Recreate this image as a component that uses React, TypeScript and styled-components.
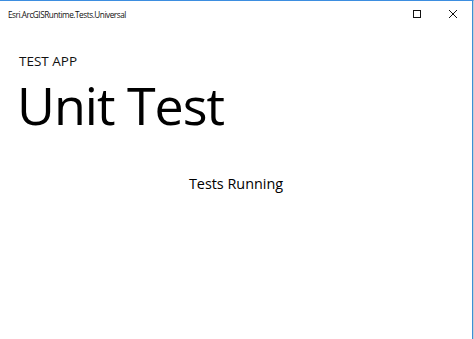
import React from 'react'
import styled, { createGlobalStyle } from 'styled-components'

const GlobalStyle = createGlobalStyle`
  html, body {
    margin: 0;
    padding: 0;
    background: #ffffff;
  }
  body {
    font-family: 'Open Sans', 'Noto Sans', sans-serif;
  }
`

const Frame = styled.div`
  width: 474px;
  height: 339px;
  display: flex;
  box-sizing: border-box;
  border-top: 1px solid #3d8ee0;
  border-right: 1px solid #c9ccd2;
  overflow: hidden;
`

const Window = styled.div`
  flex: 1;
  display: flex;
  flex-direction: column;
  border-right: 1px solid #3c8fd6;
  background: #ffffff;
`

const TitleBar = styled.div`
  height: 26px;
  display: flex;
  align-items: center;
  padding-left: 8px;
`

const TitleText = styled.span`
  flex: 1;
  font-family: 'Open Sans', sans-serif;
  font-size: 8.2px;
  letter-spacing: -0.45px;
  color: #111;
`

const Caption = styled.button<{ $w: number }>`
  width: ${p => p.$w}px;
  height: 26px;
  border: 0;
  padding: 0;
  background: transparent;
  display: flex;
  align-items: center;
  justify-content: center;
`

const Content = styled.main`
  flex: 1;
  display: flex;
  flex-direction: column;
  padding: 25px 0 0 19px;
`

const AppName = styled.div`
  font-size: 13.5px;
  line-height: 18px;
  color: #111;
`

const PageTitle = styled.h1`
  margin: 0 0 0 -2px;
  font-weight: 400;
  font-size: 52px;
  line-height: 70px;
  letter-spacing: -1px;
  color: #000;
`

const Status = styled.div`
  margin-top: 34px;
  align-self: center;
  margin-left: -19px;
  font-size: 14.4px;
  color: #000;
`

export default function App(): React.ReactElement {
  return (
    <>
      <GlobalStyle />
      <Frame>
        <Window>
          <TitleBar>
            <TitleText>Esri.ArcGISRuntime.Tests.Universal</TitleText>
            <Caption $w={34} aria-label="Maximize">
              <svg width="10" height="10" viewBox="0 0 10 10">
                <rect x="1.5" y="1.5" width="7" height="7" fill="none" stroke="#111" strokeWidth="1" />
              </svg>
            </Caption>
            <Caption $w={38} aria-label="Close">
              <svg width="10" height="10" viewBox="0 0 10 10">
                <path d="M1 1 L9 9 M9 1 L1 9" stroke="#111" strokeWidth="1" />
              </svg>
            </Caption>
          </TitleBar>
          <Content>
            <AppName>TEST APP</AppName>
            <PageTitle>Unit Test</PageTitle>
            <Status>Tests Running</Status>
          </Content>
        </Window>
      </Frame>
    </>
  )
}
